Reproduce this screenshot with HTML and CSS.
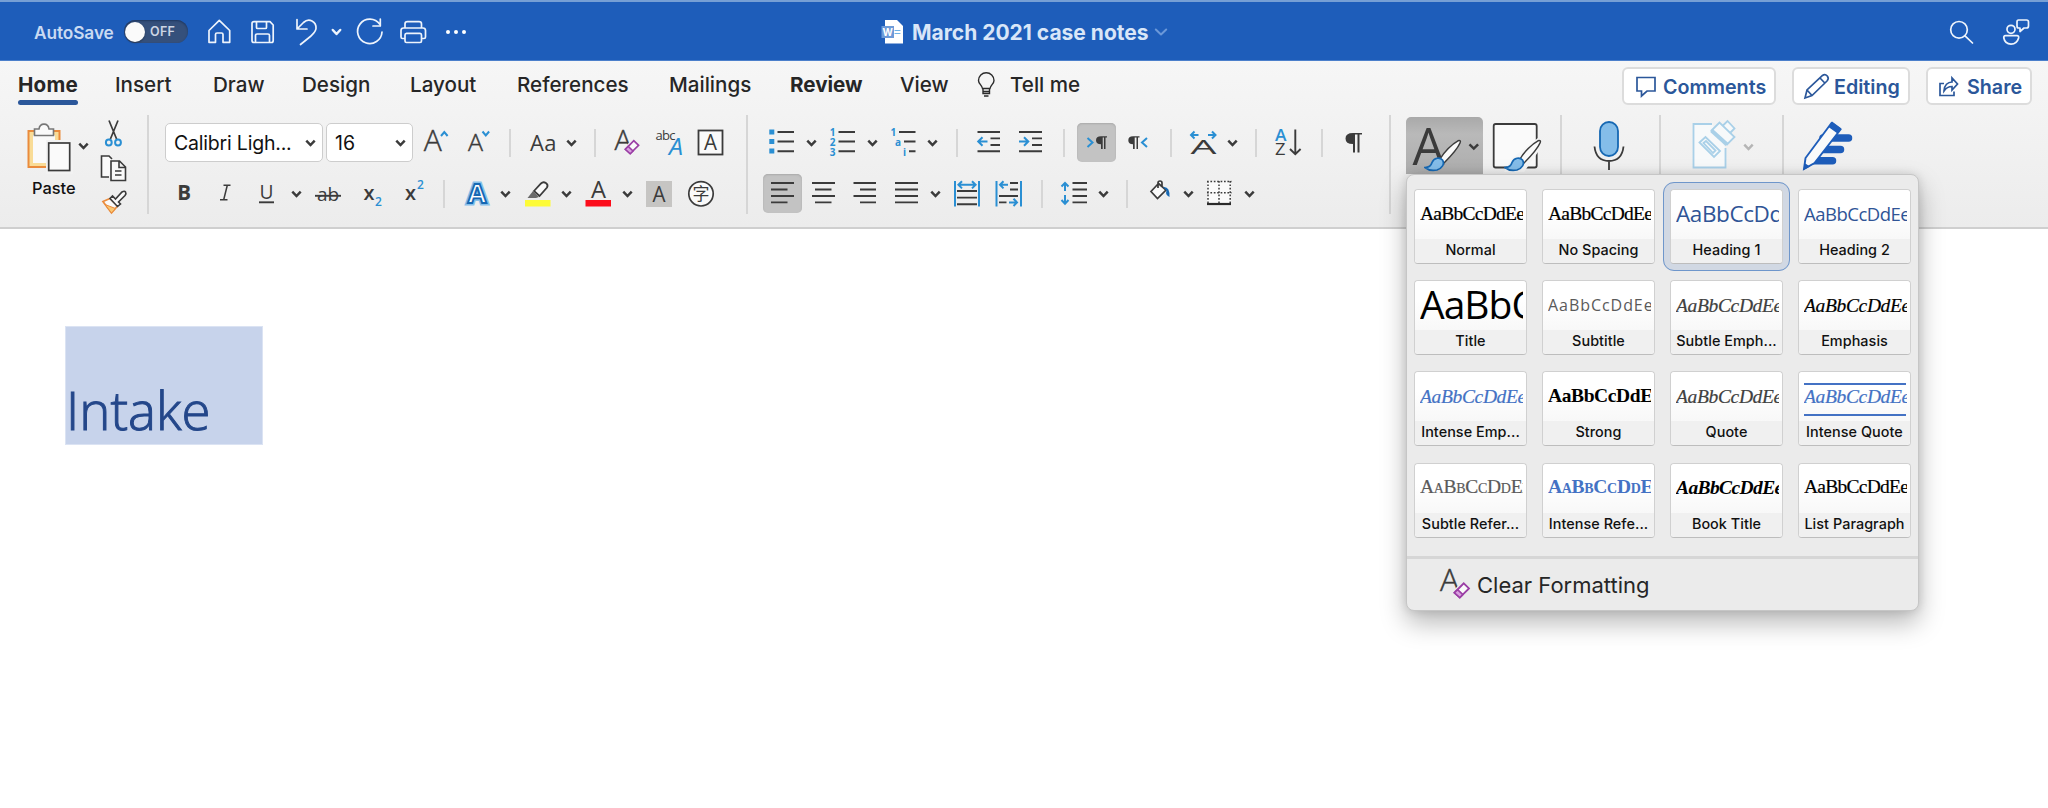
FILE: index.html
```html
<!DOCTYPE html>
<html lang="en">
<head>
<meta charset="utf-8">
<title>March 2021 case notes</title>
<link rel="stylesheet" href="styles.css">
</head>
<body>
<svg class="defs" width="0" height="0">
  <defs>
    <symbol id="chev" viewBox="0 0 11 8"><path d="M1.3 1.6 5.5 6 9.7 1.6" fill="none" stroke="currentColor" stroke-width="2.5"/></symbol>
    <symbol id="brush" viewBox="0 0 38 34">
      <path d="M16 20C20 13 28 5 34 1.800 36 1 37 2 36 4 33 11 26 18 20 24Z" fill="#fafafa" stroke="#3b3b3b" stroke-width="1.500"/>
      <path d="M1 28.500C5 28.500 7 27 8 23.500 10 18.500 16 18 18.500 21 21 25 18 29.500 13 31 8.500 32 4 31 1 28.500Z" fill="#84bde9" stroke="#1668b3" stroke-width="1.700"/>
    </symbol>
    <symbol id="eraser" viewBox="0 0 16 16">
      <path d="M1.300 10.300 9.800 1.600 14.600 6.300 6.200 14.700Z" fill="#fafafa" stroke="#9b3fa5" stroke-width="1.700"/>
      <path d="M1.300 10.300 4.200 7.400 9 12 6.200 14.700Z" fill="#d9a0df" stroke="#9b3fa5" stroke-width="1.500"/>
    </symbol>
  </defs>
</svg>

<header class="titlebar">
  <span class="autosave">AutoSave</span>
  <span class="toggle"><i class="knob"></i><b>OFF</b></span>
  <svg class="ti" width="24" viewBox="208 17 24 30"><path d="M209 30.500 219.300 20.300 229.700 30.500V42.300H223V34.500Q223 33 221.500 33H217Q215.500 33 215.500 34.500V42.300H209Z"/></svg>
  <svg class="ti" width="24" viewBox="251 17 24 30"><path d="M252 23.500Q252 21.700 254 21.700H270L273.200 25V40.500Q273.200 42.500 271.500 42.500H254Q252 42.500 252 40.500ZM256.500 22V27.500Q256.500 28.500 257.500 28.500H265.500Q266.500 28.500 266.500 27.500V22M255.500 42V35.500Q255.500 34 257 34H268Q269.500 34 269.500 35.500V42"/></svg>
  <svg class="ti" width="22" viewBox="296 17 22 30"><path d="M297 19.500V29H307M297.500 28.500 303.500 22.500C309 17.500 316.500 21.500 316 28.500 315.800 31.500 314 33 311 36L300.500 44.500"/></svg>
  <svg class="ti bold" width="11" viewBox="332 17 11 30"><path d="M332.800 30 336.500 34 340.200 30"/></svg>
  <svg class="ti" width="27" viewBox="357 17 27 30"><path d="M379.800 24.300A12.200 12.200 0 1 0 382 32M380.300 19V26H373"/></svg>
  <svg class="ti" width="28" viewBox="400 17 28 30"><path d="M405 28V24Q405 21.700 407.500 21.700H419Q421.500 21.700 421.500 24V28M405 38.500H402.500Q401 38.500 401 37V30.500Q401 28 403.500 28H423Q425.500 28 425.500 30.500V37Q425.500 38.500 424 38.500H421.500M405 35Q405 33.300 406.500 33.300H420Q421.500 33.300 421.500 35V41Q421.500 42.500 420 42.500H406.500Q405 42.500 405 41Z"/></svg>
  <svg class="ti" width="22" viewBox="446 17 22 30"><g fill="#fff" stroke="none"><circle cx="448" cy="32" r="2"/><circle cx="456" cy="32" r="2"/><circle cx="464" cy="32" r="2"/></g></svg>
  <svg class="ti" width="24" viewBox="881 17 24 30"><path d="M885 20H897L903 26V43.500H885Z" fill="#fff" stroke="none"/><path d="M895 30.500H900M895 33.500H900" stroke="#6fb2e6" stroke-width="1.200"/><rect x="881.500" y="26" width="12.500" height="12" fill="#6d9ad8" stroke="none"/><text x="887.700" y="35.800" class="wglyph">W</text></svg>
  <span class="doctitle">March 2021 case notes</span>
  <svg class="ti dim" width="13" viewBox="1155 17 13 30"><path d="M1155.800 29.500 1161 34.500 1166.200 29.500"/></svg>
  <svg class="ti" width="26" viewBox="1950 17 26 30"><circle cx="1959" cy="29.800" r="8.300"/><path d="M1965 35.800 1972.500 43"/></svg>
  <svg class="ti" width="28" viewBox="2003 17 28 30"><circle cx="2011" cy="29.300" r="4"/><path d="M2005.500 35.700H2017Q2019 35.700 2018.600 38 2017 44 2011 44.200 2005 44 2003.800 38 2003.500 35.700 2005.500 35.700ZM2018.500 20H2026.500Q2028.500 20 2028.500 22V26Q2028.500 28 2026.500 28H2024L2020 31.500V28H2018.500Q2017 28 2017 26V22Q2017 20 2018.500 20Z"/></svg>
</header>

<nav class="tabs">
  <span class="tab active">Home</span>
  <span class="tab">Insert</span>
  <span class="tab">Draw</span>
  <span class="tab">Design</span>
  <span class="tab">Layout</span>
  <span class="tab">References</span>
  <span class="tab">Mailings</span>
  <span class="tab strong">Review</span>
  <span class="tab">View</span>
  <svg class="bulb" width="18" height="26" viewBox="977 71 18 26"><path d="M982.500 87.500C982 84 978.500 83 978.500 79.500A7.700 7.700 0 0 1 994 79.500C994 83 990.500 84 990 87.500ZM983 90.500H989.500M983 87V92.500H989.500V87M984 95H988.500" fill="none" stroke="#2b2b2b" stroke-width="1.400"/></svg>
  <span class="tab">Tell me</span>
  <button class="pill comments"><svg width="20" height="24" viewBox="1636 74 20 24"><path d="M1637 77.500H1655V91H1647L1641.500 96V91H1637Z"/></svg><span>Comments</span></button>
  <button class="pill editing"><svg width="26" height="28" viewBox="1804 72 26 28"><path d="M1805 98 1807 90 1822.500 75.500Q1825 73.500 1827.300 76 1829.300 78.500 1827 81L1812 95.500ZM1807 90 1812 95.500M1820 78 1824.800 83"/></svg><span>Editing</span></button>
  <button class="pill share"><svg width="20" height="22" viewBox="1939 76 20 22"><path d="M1944 84.500H1940V96.500H1954V92.500M1944 92C1944 86 1948 83 1952 83V79L1957.500 85 1952 91V87.500C1948.500 87.500 1946 89 1944 92Z"/></svg><span>Share</span></button>
</nav>

<section class="ribbon">
  <div class="clip">
    <div class="paste">
      <svg width="46" height="52" viewBox="26 122 46 52"><rect x="28.500" y="131" width="31" height="36" fill="#f9dc97" stroke="#ea8b3c" stroke-width="2"/><rect x="33" y="135" width="22" height="28" fill="#fafafa"/><path d="M34.500 135.500V129H39C40 122.500 48 122.500 49 129H53.500V135.500Z" fill="#fafafa" stroke="#777" stroke-width="1.600"/><rect x="46" y="140" width="27" height="34" fill="#f2f2f2"/><rect x="48.700" y="143" width="21" height="27.500" fill="#fafafa" stroke="#3b3b3b" stroke-width="1.700"/></svg>
      <span>Paste</span>
    </div>
    <svg class="chev" width="11" height="8"><use href="#chev"/></svg>
    <div class="cliptools">
      <svg width="28" height="28" viewBox="100 120 28 28"><path d="M109 120.500 117 140M118 120.500 110 140" fill="none" stroke="#3b3b3b" stroke-width="1.700"/><circle cx="108.800" cy="142.500" r="2.900" class="b"/><circle cx="118" cy="142.500" r="2.900" class="b"/></svg>
      <svg width="28" height="28" viewBox="100 154 28 28"><path d="M109 177H101.500V156H109L112 159" fill="#fafafa" stroke="#3b3b3b" stroke-width="1.600"/><path d="M111 161H119.500L125.500 167V180.500H111ZM119 161V167.500H125.500M115 171H121.500M115 175H121.500" fill="#fafafa" stroke="#3b3b3b" stroke-width="1.600"/></svg>
      <svg width="28" height="28" viewBox="100 188 28 28"><path d="M103 201.500 110 198.500 117.500 206 111.500 213Z" fill="#fafafa" stroke="#ea8b3c" stroke-width="1.700"/><path d="M105 204.500 115.500 208.500 111.500 213Z" fill="#f9c873" stroke="#ea8b3c"/><path d="M110 198.500 112.500 196 115.500 199 122 192Q124.500 190.500 125.500 192 126.500 193.500 125 195.500L118.500 202 120.500 204 117.500 206.500Z" fill="#fafafa" stroke="#3b3b3b" stroke-width="1.600"/></svg>
    </div>
  </div>

  <div class="group font">
    <div class="row r1">
      <span class="field fname">Calibri Ligh...<svg class="chev" width="11" height="8"><use href="#chev"/></svg></span>
      <span class="field fsize">16<svg class="chev" width="11" height="8"><use href="#chev"/></svg></span>
      <svg class="ic" width="26" viewBox="423 123 26 39"><text x="423.800" y="150.500" class="lt" font-size="29" textLength="18" lengthAdjust="spacingAndGlyphs">A</text><path class="b" d="M441 136 444.300 132 447.600 136"/></svg>
      <svg class="ic" width="24" viewBox="467 123 24 39"><text x="468" y="150.500" class="lt" font-size="23" textLength="15" lengthAdjust="spacingAndGlyphs">A</text><path class="b" d="M482.500 131.500 485.800 135.500 489.100 131.500"/></svg>
      <i class="sep"></i>
      <svg class="ic" width="28" viewBox="530 123 28 39"><text x="530" y="150.500" class="gl" font-size="22" textLength="26.500">Aa</text></svg>
      <svg class="chev" width="11" height="8"><use href="#chev"/></svg>
      <i class="sep"></i>
      <svg class="ic" width="27" viewBox="614 123 27 39"><text x="614.500" y="150" class="lt" font-size="28" textLength="17" lengthAdjust="spacingAndGlyphs">A</text><path d="M622.500 149.500 633 138.500 640 145V156H628Z" fill="#f1f1f1"/><use href="#eraser" x="624" y="139" width="16" height="16"/></svg>
      <svg class="ic" width="29" viewBox="655 123 29 39"><text x="655.500" y="139.500" class="gl" font-size="13" textLength="20">abc</text><text x="669" y="155" class="gl it bl" font-size="23" textLength="14" lengthAdjust="spacingAndGlyphs">A</text></svg>
      <svg class="ic" width="27" viewBox="697 123 27 39"><rect x="698.500" y="130.500" width="24" height="24" fill="#fafafa" stroke="#3b3b3b" stroke-width="1.800"/><text x="704" y="150" class="gl" font-size="21" textLength="13" lengthAdjust="spacingAndGlyphs">A</text></svg>
    </div>
    <div class="row r2">
      <svg class="ic" width="14" viewBox="179 174 14 39"><text x="177.300" y="200" class="gl hv" font-size="20.500">B</text></svg>
      <svg class="ic" width="13" viewBox="219 174 13 39"><path d="M223.500 185.300H230.500M220 199.700H227.500M227.300 185.300 223.700 199.700" fill="none" stroke="#3b3b3b" stroke-width="1.500"/></svg>
      <svg class="ic" width="16" viewBox="259 174 16 39"><text x="259.500" y="199" class="gl" font-size="20" textLength="14" lengthAdjust="spacingAndGlyphs">U</text><path class="k" d="M259 202.300H274"/></svg>
      <svg class="chev" width="11" height="8"><use href="#chev"/></svg>
      <svg class="ic" width="27" viewBox="315 174 27 39"><text x="317" y="201" class="gl" font-size="19" textLength="22">ab</text><path class="k" d="M315 195.800H341"/></svg>
      <svg class="ic" width="20" viewBox="364 174 20 39"><text x="363.500" y="199.500" class="gl sb" font-size="20">x</text><text x="375" y="206.300" class="gl bl sb" font-size="12">2</text></svg>
      <svg class="ic" width="20" viewBox="406 174 20 39"><text x="405" y="199.500" class="gl sb" font-size="20">x</text><text x="417" y="189" class="gl bl sb" font-size="12">2</text></svg>
      <i class="sep"></i>
      <svg class="ic" width="26" viewBox="464 174 26 39"><text x="477" y="203.300" class="fx fx1">A</text><text x="477" y="203.300" class="fx fx2">A</text></svg>
      <svg class="chev" width="11" height="8"><use href="#chev"/></svg>
      <svg class="ic" width="27" viewBox="525 174 27 39"><rect x="525" y="200" width="25.500" height="6.500" fill="#fdfb37"/><path d="M534 191 541 183.500C544 180.500 549 184 547 187.500L539.500 196Z" fill="#fafafa" stroke="#3b3b3b" stroke-width="1.800"/><path d="M533 191 539 197 536 198H527.500Z" fill="#6b6b6b"/></svg>
      <svg class="chev" width="11" height="8"><use href="#chev"/></svg>
      <svg class="ic" width="27" viewBox="585 174 27 39"><rect x="585.500" y="200" width="25.500" height="6.500" fill="#fc0d1b"/><text x="591" y="198" class="gl" font-size="23" textLength="15" lengthAdjust="spacingAndGlyphs">A</text></svg>
      <svg class="chev" width="11" height="8"><use href="#chev"/></svg>
      <svg class="ic" width="27" viewBox="646 174 27 39"><rect x="646" y="181" width="26" height="26" fill="#c6c5c3"/><text x="652.500" y="201.500" class="gl" font-size="21" textLength="13" lengthAdjust="spacingAndGlyphs">A</text></svg>
      <svg class="ic" width="27" viewBox="688 174 27 39"><circle cx="701" cy="193.800" r="12.200" fill="#fafafa" stroke="#3b3b3b" stroke-width="1.700"/><text x="701" y="200" class="cjk">字</text></svg>
    </div>
  </div>

  <div class="group para">
    <div class="row r1">
      <svg class="ic" width="26" viewBox="769 123 26 39"><path d="M769.300 129.500h5v5h-5zM769.300 139h5v5h-5zM769.300 148.500h5v5h-5z" fill="#2a8fd3"/><path class="k" d="M777.500 132H794M777.500 141.500H794M777.500 151.200H794"/></svg>
      <svg class="chev" width="11" height="8"><use href="#chev"/></svg>
      <svg class="ic" width="26" viewBox="830 123 26 39"><g class="gl bl hv" font-size="10"><text x="829.800" y="135.700">1</text><text x="829.800" y="145.700">2</text><text x="829.800" y="155.700">3</text></g><path class="k" d="M838.500 132H855M838.500 141.500H855M838.500 151.200H855"/></svg>
      <svg class="chev" width="11" height="8"><use href="#chev"/></svg>
      <svg class="ic" width="26" viewBox="891 123 26 39"><g class="gl bl hv" font-size="10"><text x="890.500" y="135.700">1</text><text x="895" y="145.700">a</text><text x="903" y="155.700">i</text></g><path class="k" d="M899 132H915.500M904 141.500H915.500M909 151.200H915.500"/></svg>
      <svg class="chev" width="11" height="8"><use href="#chev"/></svg>
      <i class="sep"></i>
      <svg class="ic" width="24" viewBox="977 123 24 39"><path class="k" d="M977.500 132H1000M990.500 138.400H1000M990.500 145H1000M977.500 151.200H1000"/><path class="b" d="M978 141.500H987.500M982.500 137.200 978.200 141.500 982.500 145.800"/></svg>
      <svg class="ic" width="24" viewBox="1019 123 24 39"><path class="k" d="M1019 132H1042M1032 138.400H1042M1032 145H1042M1019 151.200H1042"/><path class="b" d="M1019 141.500H1028.500M1024 137.200 1028.300 141.500 1024 145.800"/></svg>
      <i class="sep"></i>
      <span class="pressed"><svg class="ic" width="22" viewBox="1085 123 22 39"><path class="b" d="M1086.500 138 1091.500 142.500 1086.500 147"/><path d="M1106 136.300H1100Q1095 136.300 1095 140.300T1100 144.300V149H1101.700V137.500H1103V149H1104.500V137.500H1106Z" fill="#3b3b3b"/></svg></span>
      <svg class="ic" width="22" viewBox="1127 123 22 39"><path class="b" d="M1147 138 1142 142.500 1147 147"/><path d="M1139.500 136.300H1133Q1128.300 136.300 1128.300 140.300T1133 144.300V149H1134.700V137.500H1136.500V149H1138V137.500H1139.500Z" fill="#3b3b3b"/></svg>
      <i class="sep"></i>
      <svg class="ic" width="27" viewBox="1190 123 27 39"><path class="b" d="M1191 135H1198.500M1194.500 131.500 1191 135 1194.500 138.500M1208 135H1215.500M1212 131.500 1215.500 135 1212 138.500"/><text x="1190.500" y="153.500" class="gl" font-size="20" textLength="26" lengthAdjust="spacingAndGlyphs">A</text></svg>
      <svg class="chev" width="11" height="8"><use href="#chev"/></svg>
      <i class="sep"></i>
      <svg class="ic" width="27" viewBox="1275 123 27 39"><text x="1275" y="140.700" class="gl bl sb" font-size="15.500" textLength="11.500" lengthAdjust="spacingAndGlyphs">A</text><text x="1275" y="155" class="gl" font-size="16" textLength="10.500" lengthAdjust="spacingAndGlyphs">Z</text><path class="k" d="M1295.300 129.500V154M1290 149 1295.300 154.200 1300.600 149"/></svg>
      <i class="sep"></i>
      <svg class="ic" width="18" viewBox="1345 123 18 39"><path d="M1362 133H1353Q1345.500 133 1345.500 138.500T1353 144V152.500H1355V134.500H1357.500V152.500H1359.500V134.500H1362Z" fill="#3b3b3b"/></svg>
    </div>
    <div class="row r2">
      <span class="pressed"><svg class="ic" width="24" viewBox="771 174 24 39"><path class="k" d="M771 183H794M771 189.500H787.500M771 196H794M771 202.400H787.500"/></svg></span>
      <svg class="ic" width="24" viewBox="813 174 24 39"><path class="k" d="M813 183H836M816 189.500H832.500M813 196H836M816 202.400H832.500"/></svg>
      <svg class="ic" width="24" viewBox="854 174 24 39"><path class="k" d="M854.500 183H877M861 189.500H877M854.500 196H877M861 202.400H877"/></svg>
      <svg class="ic" width="24" viewBox="896 174 24 39"><path class="k" d="M896 183H919M896 189.500H919M896 196H919M896 202.400H919"/></svg>
      <svg class="chev" width="11" height="8"><use href="#chev"/></svg>
      <svg class="ic" width="27" viewBox="955 174 27 39"><path class="k" d="M958 191H978M958 197.600H978M958 204.300H978"/><path class="b" d="M956 181V206.500M980 181V206.500M959.500 184.800H976.500M963 181.200 959.400 184.800 963 188.400M973 181.200 976.600 184.800 973 188.400"/></svg>
      <svg class="ic" width="28" viewBox="996 174 28 39"><path class="k" d="M1011 183H1019M1011 189.500H1019M1000 196H1019M1000 202.400H1007.500"/><path class="b" d="M997.500 181V206.500M1022 181V206.500M1001 184.800H1009M1004.500 181.200 1001 184.800 1004.500 188.400M1010 202.400H1018M1014.500 198.800 1018 202.400 1014.500 206"/></svg>
      <i class="sep"></i>
      <svg class="ic" width="27" viewBox="1062 174 27 39"><path class="k" d="M1073.500 183H1088M1073.500 189.500H1088M1073.500 196H1088M1073.500 202.400H1088"/><path class="b" d="M1066 183V191M1062.500 186.500 1066 183 1069.500 186.500M1066 195V203.500M1062.500 200 1066 203.800 1069.500 200"/></svg>
      <svg class="chev" width="11" height="8"><use href="#chev"/></svg>
      <i class="sep"></i>
      <svg class="ic" width="22" viewBox="1150 174 22 39"><path d="M1159 184 1152 191.500 1158.500 198.500 1167 190 1159.500 183.500M1159 188V183Q1159 181 1161 181T1163 183V187" fill="#fafafa" stroke="#3b3b3b" stroke-width="1.700"/><path d="M1164 187Q1171 186 1170.500 197 1166 195 1167.500 190.500Z" fill="#1668b3"/></svg>
      <svg class="chev" width="11" height="8"><use href="#chev"/></svg>
      <svg class="ic" width="26" viewBox="1207 174 26 39"><rect x="1208" y="181" width="24" height="23" fill="#fafafa"/><path d="M1208 181.500H1232.500M1209 181V203M1220 181V203M1231.200 181V203M1208 192.700H1232.500" fill="none" stroke="#3b3b3b" stroke-width="1.500" stroke-dasharray="1.700 1.700"/><path d="M1208 204H1232" stroke="#2b2b2b" stroke-width="2.200"/></svg>
      <svg class="chev" width="11" height="8"><use href="#chev"/></svg>
    </div>
  </div>

  <div class="group right">
    <span class="stylebtn"><svg width="77" height="57" viewBox="1406 117 77 57"><text x="1412.500" y="164.500" class="gl" font-size="52" textLength="32" lengthAdjust="spacingAndGlyphs">A</text><use href="#brush" x="1424" y="139" width="38" height="34"/><path d="M1469.500 144.300 1473.800 148.600 1478.100 144.300" fill="none" stroke="#3b3b3b" stroke-width="2.500"/></svg></span>
    <svg width="50" height="57" viewBox="1492 117 50 57"><rect x="1493.700" y="124" width="43" height="43.500" rx="2" fill="#fafafa" stroke="#3b3b3b" stroke-width="1.800"/><path d="M1504 172 1512 158 1538 138V152L1524 172Z" fill="#f6f6f6"/><use href="#brush" x="1504" y="139" width="38" height="34"/></svg>
    <i class="bar"></i>
    <svg width="32" height="57" viewBox="1593.500 117 32 57"><rect x="1600.500" y="122" width="18" height="34" rx="9" fill="#84bde9" stroke="#1668b3" stroke-width="1.800"/><path d="M1595 146.500Q1596.500 161 1609.500 161T1624 146.500M1609.500 161V170" fill="none" stroke="#3b3b3b" stroke-width="1.800"/></svg>
    <i class="bar"></i>
    <svg width="46" height="57" viewBox="1693 117 46 57"><g fill="#f7f9fa" stroke="#a9d0e8" stroke-width="1.800"><path d="M1713 124H1694.500V167.500H1726.500V148"/><path d="M1700.500 142.500 1706.500 137 1721 151 1715 157Z"/><path d="M1704.500 143 1707 141 1716.500 150.500 1714 153Z"/><path d="M1724 125.500 1728.500 121 1735.500 128.500 1731 133"/><path d="M1712.500 130.500 1720.500 122.500 1735.500 137 1728 144.500Z"/><path d="M1712.500 130.500 1728 144.500" stroke-width="4"/></g></svg>
    <svg class="chev pale" width="11" height="8"><use href="#chev"/></svg>
    <i class="bar"></i>
    <svg width="52" height="57" viewBox="1803 117 52 57"><path d="M1824 138H1849.500M1820 149.500H1841.500M1812 160.800H1833.500" stroke="#1e5dba" stroke-width="7.500" stroke-linecap="round"/><path d="M1805 169 1806.500 158 1832.500 123 1841.500 129.500 1815.500 163Z" fill="#fafafa" stroke="#1e5dba" stroke-width="1.900"/><path d="M1829.500 127 1833 121.500 1842.500 128.500 1838.500 133.500ZM1804.500 170 1805.500 163 1811 166.500Z" fill="#1e5dba"/></svg>
  </div>
</section>

<main class="page">
  <div class="selection"><span>Intake</span></div>
</main>

<aside class="gallery">
  <div class="cards">
    <div class="card"><div class="prev"><span class="serif">AaBbCcDdEe</span></div><div class="name">Normal</div></div>
    <div class="card"><div class="prev"><span class="serif">AaBbCcDdEe</span></div><div class="name">No Spacing</div></div>
    <div class="card chosen"><div class="prev"><span class="h1">AaBbCcDdEe</span></div><div class="name">Heading 1</div></div>
    <div class="card"><div class="prev"><span class="h2">AaBbCcDdEe</span></div><div class="name">Heading 2</div></div>
    <div class="card"><div class="prev"><span class="title">AaBbCcDdEe</span></div><div class="name">Title</div></div>
    <div class="card"><div class="prev"><span class="subtitle">AaBbCcDdEe</span></div><div class="name">Subtitle</div></div>
    <div class="card"><div class="prev"><span class="serif ital gray">AaBbCcDdEe</span></div><div class="name">Subtle Emph...</div></div>
    <div class="card"><div class="prev"><span class="serif ital">AaBbCcDdEe</span></div><div class="name">Emphasis</div></div>
    <div class="card"><div class="prev"><span class="serif ital blue">AaBbCcDdEe</span></div><div class="name">Intense Emp...</div></div>
    <div class="card"><div class="prev"><span class="serif fat">AaBbCcDdEe</span></div><div class="name">Strong</div></div>
    <div class="card"><div class="prev"><span class="serif ital gray">AaBbCcDdEe</span></div><div class="name">Quote</div></div>
    <div class="card"><div class="prev lined"><span class="serif ital blue">AaBbCcDdEe</span></div><div class="name">Intense Quote</div></div>
    <div class="card"><div class="prev"><span class="serif caps lgray">AaBbCcDdEe</span></div><div class="name">Subtle Refer...</div></div>
    <div class="card"><div class="prev"><span class="serif caps fat blue">AaBbCcDdEe</span></div><div class="name">Intense Refe...</div></div>
    <div class="card"><div class="prev"><span class="serif ital fat tight">AaBbCcDdEe</span></div><div class="name">Book Title</div></div>
    <div class="card"><div class="prev"><span class="serif">AaBbCcDdEe</span></div><div class="name">List Paragraph</div></div>
  </div>
  <div class="clear">
    <svg width="31" height="32" viewBox="1440 567 31 32"><text x="1440" y="590" class="lt" font-size="31" textLength="19" lengthAdjust="spacingAndGlyphs">A</text><path d="M1451.500 592 1463 579 1471 586V599H1457Z" fill="#ebebeb"/><use href="#eraser" x="1453" y="580.500" width="17.500" height="17.500"/></svg>
    <span>Clear Formatting</span>
  </div>
</aside>
</body>
</html>
```
FILE: styles.css
```css
* { box-sizing: border-box; }
body {
  margin: 0;
  width: 2048px;
  height: 808px;
  overflow: hidden;
  position: relative;
  background: #fff;
  color: #262626;
  font-family: Inter, "Liberation Sans", sans-serif;
}
svg { display: block; overflow: visible; }
.defs { position: absolute; }
span { white-space: nowrap; }

/* Title bar */
.titlebar {
  display: grid;
  grid-template-columns: 90px 84px 43px 45px 36px 25px 43px 46px 435px 31px 243px 795px 53px 30px;
  align-items: center;
  height: 61px;
  padding: 1px 0 0 34px;
  background: #1e5dba;
  border-top: 2px solid #769fd5;
  border-bottom: 1px solid #4b7fcb;
}
.ti { height: 30px; fill: none; stroke: #eef4fc; stroke-width: 1.7; stroke-linejoin: round; stroke-linecap: round; }
.ti.bold { stroke-width: 2.5; }
.ti.dim { stroke: #6b98d9; stroke-width: 2; }
.autosave { padding-top: 1px; font-size: 17.3px; font-weight: 600; color: #c9daf2; letter-spacing: -0.1px; }
.toggle {
  display: flex;
  align-items: center;
  width: 64px;
  height: 23px;
  border-radius: 12px;
  background: #35507b;
  box-shadow: inset 0 1px 2px #1c3560;
}
.knob { width: 20px; height: 20px; margin: 0 5px 0 1px; border-radius: 50%; background: #fafafa; box-shadow: 0 1px 2px #0005; }
.toggle b { font-size: 12.5px; font-weight: 600; color: #ccd5e3; letter-spacing: 0.3px; }
.doctitle { padding-top: 1px; font-size: 21px; font-weight: 700; color: #d9e6f8; }
.wglyph { font: 700 10px Inter, sans-serif; fill: #fff; stroke: none; text-anchor: middle; }

/* Tabs */
.tabs {
  display: grid;
  grid-template-columns: 97px 98px 89px 108px 107px 152px 121px 110px 77px 33px 612px 170px 134px 106px;
  align-items: center;
  height: 52px;
  padding-left: 18px;
  background: linear-gradient(#f6f6f6, #f3f3f3);
}
.tab { font-size: 20.6px; font-weight: 500; line-height: 30px; padding-bottom: 5px; justify-self: start; }
.tab.active { font-weight: 700; padding: 0; letter-spacing: 0.2px; }
.tab.active::after { content: ""; display: block; height: 5px; border-radius: 2.5px; background: #2b579a; }
.tab.strong { font-weight: 700; }
.bulb { margin-bottom: 5px; }
.pill {
  display: flex;
  align-items: center;
  height: 38px;
  padding: 0;
  margin-top: -2px;
  border: 2px solid #dcdcdc;
  border-radius: 6px;
  background: #fff;
  color: #2b579a;
  font: 600 19.7px Inter, "Liberation Sans", sans-serif;
}
.pill span { padding-top: 2px; }
.pill svg { fill: none; stroke: #2b579a; stroke-width: 1.7; }
.comments { width: 154px; padding-left: 12px; gap: 7px; }
.editing { width: 118px; padding-left: 10px; gap: 4px; }
.share { width: 106px; padding-left: 11px; gap: 8px; }

/* Ribbon */
.ribbon {
  display: grid;
  grid-template-columns: 147px 599px 643px 659px;
  height: 116px;
  padding-top: 2px;
  background: linear-gradient(#f3f3f3, #ececec);
  border-bottom: 2px solid #cfcfcf;
}
.clip { display: grid; grid-template-columns: 52px 22px 28px; padding-left: 26px; }
.clip .chev { margin: 27px 0 0; }
.paste { padding-top: 7px; font-size: 16.4px; font-weight: 450; color: #111; }
.paste span { display: block; margin: 3px 0 0 6px; line-height: 22px; }
.cliptools { display: flex; flex-direction: column; gap: 6px; padding-top: 5px; }
.group { height: 99px; border-left: 2px solid #d6d6d6; }
.font, .para { display: flex; flex-direction: column; gap: 12px; padding-top: 8px; }
.row { display: grid; height: 39px; align-items: center; justify-items: start; }
.font .r1 { padding-left: 16px; grid-template-columns: 161px 97px 44px 42px 21px 36px 28px 20px 41px 42px 30px; }
.font .r2 { padding-left: 30px; grid-template-columns: 40px 40px 32px 24px 49px 42px 37px 21px 36px 25px 36px 24px 37px 24px 42px 30px; }
.para .r1 { padding-left: 21px; grid-template-columns: 37px 24px 37px 24px 36px 29px 21px 42px 44px 14px 50px 43px 20px 37px 28px 20px 46px 24px 20px; }
.para .r2 { padding-left: 15px; grid-template-columns: 49px 41px 42px 35px 24px 41px 46px 20px 37px 28px 23px 34px 23px 38px 14px; }
.right {
  display: grid;
  grid-template-columns: 86px 68px 33px 66px 33px 51px 39px 20px 52px;
  padding-left: 15px;
  align-items: start;
}
.right > svg, .stylebtn { margin-top: 2px; }
.right > .chev { margin-top: 28px; }
.chev { color: #3b3b3b; }
.chev.pale { color: #b5b5b5; }
.ic { height: 39px; }
.sep { width: 2px; height: 28px; background: #d6d6d6; }
.bar { width: 2px; height: 99px; background: #d6d6d6; }
.field {
  display: flex;
  justify-content: space-between;
  align-items: center;
  height: 39px;
  padding: 0 6px 0 8px;
  border: 1.5px solid #cdcdcd;
  border-radius: 5px;
  background: #fff;
  color: #111;
  font-size: 19.5px;
}
.fname { width: 158px; letter-spacing: -0.2px; }
.fsize { width: 87px; }
.pressed { display: flex; justify-content: center; width: 39px; height: 39px; border-radius: 5px; background: #c3c3c3; box-shadow: inset 0 1px 2px #aaa; }
.stylebtn { width: 77px; height: 57px; border-radius: 5px 5px 0 0; background: linear-gradient(#a9a9a9, #b9b9b9 30%, #adadad); }

.k { fill: none; stroke: #3b3b3b; stroke-width: 1.9; }
.b { fill: none; stroke: #2a8fd3; stroke-width: 2; }
.gl, .lt { font-family: "Open Sans", "Noto Sans", sans-serif; fill: #3b3b3b; }
.lt { font-weight: 300; stroke: #3b3b3b; stroke-width: 0.4; }
.it { font-style: italic; }
.bl { fill: #2a8fd3; }
.sb { font-weight: 600; }
.hv { font-weight: 700; }
.fx { font: 700 27px "Open Sans", sans-serif; text-anchor: middle; }
.fx1 { fill: none; stroke: #86bfe9; stroke-width: 5; }
.fx2 { fill: #fff; stroke: #1668b3; stroke-width: 1.9; }
.cjk { font: 17px "Noto Sans CJK SC", sans-serif; fill: #3b3b3b; text-anchor: middle; }

/* Document */
.page { padding: 97px 0 0 65px; }
.selection { width: 198px; height: 119px; padding: 47px 0 0 0; background: #c7d3eb; border: 1px solid #dbe3f3; }
.selection span {
  display: inline-block;
  font: 300 53.5px/72px "Open Sans", sans-serif;
  color: #24478a;
  -webkit-text-stroke: 1px #24478a;
  transform: scaleX(0.985);
  transform-origin: 0 0;
}

/* Style gallery */
.gallery {
  position: absolute;
  left: 1406px;
  top: 174px;
  width: 513px;
  height: 437px;
  background: #ebebeb;
  border: 1px solid #c6c6c6;
  border-radius: 8px;
  box-shadow: 0 12px 26px rgba(0, 0, 0, 0.28), 0 0 10px rgba(0, 0, 0, 0.12);
}
.cards {
  display: grid;
  grid-template-columns: repeat(4, 113px);
  grid-auto-rows: 75px;
  column-gap: 15px;
  row-gap: 16.2px;
  height: 384px;
  padding: 14px 0 0 7px;
  border-bottom: 3px solid #d6d6d6;
}
.card { background: #fff; border: 1px solid #d0d0d0; border-bottom-color: #bdbdbd; border-radius: 4px; }
.chosen { outline: 1.5px solid #6e96cb; outline-offset: 6.5px; box-shadow: 0 0 0 7px #d1d8e3; }
.prev {
  display: flex;
  align-items: center;
  height: 49px;
  padding: 0 3px 0 5px;
  background: linear-gradient(#fff 40%, #f8f8f8);
  border-radius: 4px 4px 0 0;
  position: relative;
}
.prev span { display: block; width: 103px; overflow: hidden; line-height: 44px; }
.prev .serif { margin-top: -2px; font-family: "Liberation Serif", serif; font-size: 19.5px; color: #000; letter-spacing: -0.75px; -webkit-text-stroke: 0.2px; }
.prev .ital { margin-top: 0; letter-spacing: -0.35px; }
.prev .ital { font-style: italic; }
.prev .gray { color: #404040; }
.prev .lgray { color: #5a5a5a; }
.prev .blue { color: #4472c4; }
.prev .fat { font-weight: 700; letter-spacing: -0.4px; -webkit-text-stroke: 0; }
.prev .tight { letter-spacing: -0.6px; }
.prev .caps { font-variant: small-caps; letter-spacing: -0.3px; }
.prev .h1, .prev .h2, .prev .title, .prev .subtitle { font-family: "Open Sans", sans-serif; font-weight: 400; color: #2f5496; margin-top: -2px; }
.prev .h1 { font-size: 22.5px; letter-spacing: -0.4px; }
.prev .h2 { font-size: 18.5px; letter-spacing: -0.5px; }
.prev .title { font-size: 39px; color: #000; letter-spacing: -1px; margin-top: -4px; }
.prev .subtitle { font-size: 16px; color: #5a5a5a; letter-spacing: 0.95px; }
.lined::before { content: ""; position: absolute; left: 5px; right: 4px; top: 11px; height: 29px; border-top: 2px solid #4472c4; border-bottom: 2px solid #4472c4; }
.name { height: 24px; background: #f0f0f0; border-radius: 0 0 4px 4px; text-align: center; white-space: nowrap; font-size: 14.4px; font-weight: 450; letter-spacing: 0.05px; line-height: 22px; color: #111; }
.clear { display: flex; align-items: center; gap: 6px; height: 50px; padding-left: 33px; font-size: 22px; color: #262626; }
.clear span { padding-top: 1px; }
```
